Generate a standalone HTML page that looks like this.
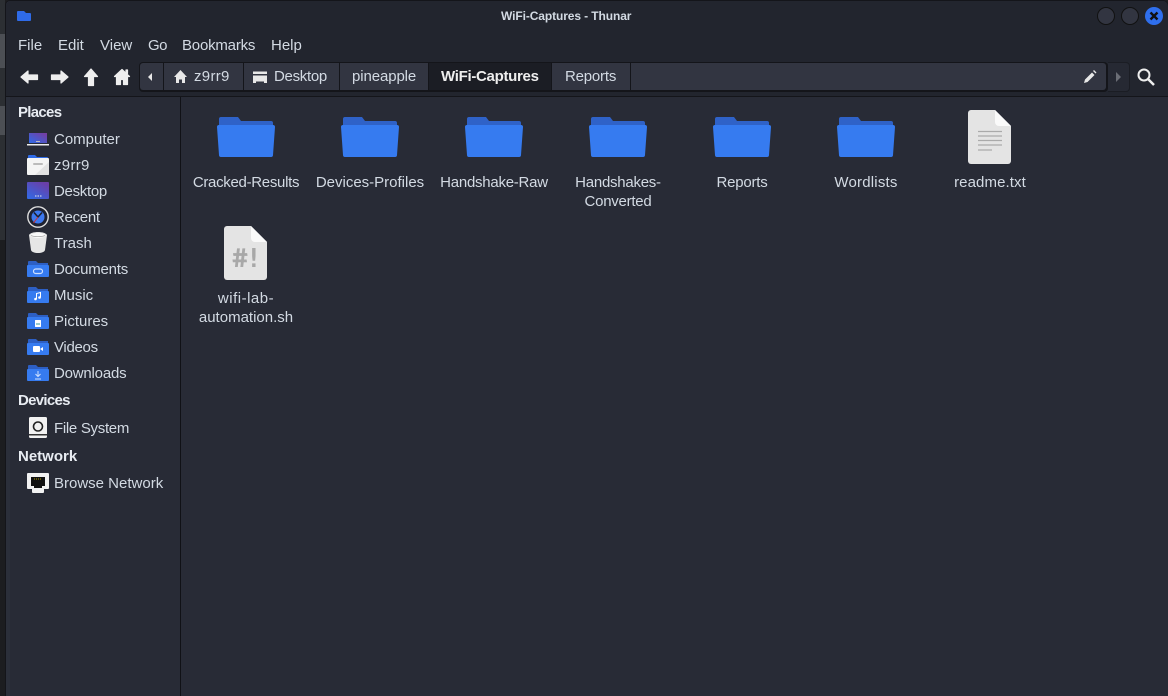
<!DOCTYPE html>
<html><head><meta charset="utf-8"><style>
html,body{margin:0;padding:0;width:1168px;height:696px;overflow:hidden;background:#1c1d20}
body{position:relative;font-family:"Liberation Sans",sans-serif;font-size:15px;color:#d3dae3}
.a{position:absolute;white-space:nowrap;line-height:18px}
.c{position:absolute;text-align:center;width:120px;line-height:19px}
.b{position:absolute;background:#323541;top:63px;height:27px;border-right:1px solid #14151a;box-sizing:border-box}
.h{font-weight:700;color:#e8ecf2;font-size:15px}
svg{position:absolute;overflow:visible}
</style></head><body>
<div style="position:absolute;left:0;top:0;width:5px;height:240px;background:#2c2f33"></div>
<div style="position:absolute;left:0;top:34px;width:5px;height:34px;background:#4c4f54"></div>
<div style="position:absolute;left:0;top:106px;width:5px;height:29px;background:#4c4f54"></div>
<div style="position:absolute;left:5px;top:0;width:1163px;height:696px;background:#282b36;border-radius:5px 5px 0 0;border:1px solid #14151a;border-bottom:0;box-sizing:border-box"></div>
<div style="position:absolute;left:6px;top:1px;width:1162px;height:95px;background:#22252e;border-radius:5px 5px 0 0"></div>
<div style="position:absolute;left:6px;top:96px;width:1162px;height:1px;background:#14151a"></div>
<div style="position:absolute;left:6px;top:97px;width:4px;height:599px;background:#2b2f3a"></div>
<div style="position:absolute;left:180px;top:97px;width:1px;height:599px;background:#101116"></div>
<div style="position:absolute;left:181px;top:97px;width:987px;height:599px;background:#282b36"></div>

<svg style="left:0;top:0" width="40" height="30"><path d="M17 12a1 1 0 0 1 1-1h6l2 2h4a1 1 0 0 1 1 1v6a1 1 0 0 1-1 1H18a1 1 0 0 1-1-1z" fill="#2f6be8"/></svg>
<div class="a" style="left:501px;top:7px;font-size:12px;font-weight:700;letter-spacing:-.1px;color:#d3dae3">WiFi-Captures - Thunar</div>
<div style="position:absolute;left:1097px;top:7px;width:16px;height:16px;border-radius:50%;background:#323541;border:1px solid #111"></div>
<div style="position:absolute;left:1121px;top:7px;width:16px;height:16px;border-radius:50%;background:#323541;border:1px solid #111"></div>
<div style="position:absolute;left:1145px;top:7px;width:18px;height:18px;border-radius:50%;background:#2f6fed"></div>
<svg style="left:1145px;top:7px" width="18" height="18"><path d="M5.500 5.500l7 7M12.500 5.500l-7 7" stroke="#111" stroke-width="2.400"/></svg>

<div class="a" style="left:18px;top:37px">File</div>
<div class="a" style="left:58px;top:37px">Edit</div>
<div class="a" style="left:100px;top:37px">View</div>
<div class="a" style="left:148px;top:37px;letter-spacing:-.5px">Go</div>
<div class="a" style="left:182px;top:37px;letter-spacing:-.2px">Bookmarks</div>
<div class="a" style="left:271px;top:37px">Help</div>

<svg style="left:0;top:60px" width="140" height="36" fill="#eee" stroke="#eee" stroke-width="1.200" stroke-linejoin="round">
<path d="M21 17l7-6v4h9.500v4.500H28v3.500z"/>
<path d="M68 17l-7-6v4h-9.500v4.500H61v3.500z"/>
<path d="M91 9l6.500 7.500h-4v9h-5v-9h-4z"/>
<path d="M122 9.500l7.500 7h-2v8H123.500v-5h-3v5h-4v-8h-2z"/><path d="M126 10h1.500v3.500l-1.500-1.500z"/>
</svg>

<div style="position:absolute;left:139px;top:62px;width:969px;height:30px;background:#14151a;border-radius:4px"></div>
<div class="b" style="left:140px;width:24px;border-radius:3px 0 0 3px"></div>
<div class="b" style="left:164px;width:80px"></div>
<div class="b" style="left:244px;width:96px"></div>
<div class="b" style="left:340px;width:89px"></div>
<div class="b" style="left:429px;width:123px;background:#1b1d24"></div>
<div class="b" style="left:552px;width:79px"></div>
<div class="b" style="left:631px;width:475px;border:0;border-radius:0 3px 3px 0"></div>
<svg style="left:140px;top:63px" width="1030" height="28" fill="#e8e8e8">
<path d="M8 14l4-4v8z"/>
<path d="M40.500 7l6.500 7h-2v6h-3v-3.500h-3V20h-3v-6h-2z"/>
<path d="M113 8.500h14V11h-14zM113 12.500h14V20h-3v-1.500h-8V20h-3z"/>
<path d="M944 20l1-3.500 7-7 2.500 2.500-7 7zM953 8l1-1 2.500 2.500-1 1z"/>
</svg>
<div style="position:absolute;left:1108px;top:62px;width:22px;height:30px;background:#262933;border-radius:0 4px 4px 0;box-sizing:border-box;border:1px solid #1b1d24;border-left:0"></div>
<svg style="left:1116px;top:72px" width="10" height="10"><path d="M0 0l5 5-5 5z" fill="#6a6d75"/></svg>
<svg style="left:1135px;top:67px" width="22" height="20" fill="none" stroke="#eee" stroke-width="2"><circle cx="9" cy="8" r="5.500"/><path d="M13 12l6 6" stroke-width="2.500"/></svg>

<div class="a" style="left:194px;top:68px;letter-spacing:.3px">z9rr9</div>
<div class="a" style="left:274px;top:68px;letter-spacing:-.3px">Desktop</div>
<div class="a" style="left:352px;top:68px;letter-spacing:-.1px">pineapple</div>
<div class="a" style="left:441px;top:68px;font-weight:700;color:#eee;letter-spacing:-.3px">WiFi-Captures</div>
<div class="a" style="left:565px;top:68px;letter-spacing:-.2px">Reports</div>

<div class="a h" style="left:18px;top:104px;letter-spacing:-.7px">Places</div>
<div class="a" style="left:54px;top:131px">Computer</div>
<div class="a" style="left:54px;top:157px;letter-spacing:.3px">z9rr9</div>
<div class="a" style="left:54px;top:183px;letter-spacing:-.3px">Desktop</div>
<div class="a" style="left:54px;top:209px;letter-spacing:-.3px">Recent</div>
<div class="a" style="left:54px;top:235px">Trash</div>
<div class="a" style="left:54px;top:261px;letter-spacing:-.2px">Documents</div>
<div class="a" style="left:54px;top:287px">Music</div>
<div class="a" style="left:54px;top:313px">Pictures</div>
<div class="a" style="left:54px;top:339px;letter-spacing:-.3px">Videos</div>
<div class="a" style="left:54px;top:365px;letter-spacing:-.2px">Downloads</div>
<div class="a h" style="left:18px;top:392px;letter-spacing:-.7px">Devices</div>
<div class="a" style="left:54px;top:420px;letter-spacing:-.3px">File System</div>
<div class="a h" style="left:18px;top:448px">Network</div>
<div class="a" style="left:54px;top:475px">Browse Network</div>

<svg style="left:0;top:0" width="60" height="500">
<defs><linearGradient id="g" x1="0" y1="1" x2="1" y2="0"><stop offset="0" stop-color="#2f6be8"/><stop offset="1" stop-color="#7a3a9c"/></linearGradient>
<linearGradient id="g2" x1="0" y1="1" x2=".7" y2="0"><stop offset="0" stop-color="#2f6be8"/><stop offset="1" stop-color="#6a3fa8"/></linearGradient></defs>
<rect x="29" y="133" width="18" height="10" fill="url(#g)"/><rect x="27" y="144" width="22" height="1.500" fill="#eee"/><rect x="36" y="141" width="4" height="1" fill="#bbb"/>
<path d="M28 156a1 1 0 0 1 1-1h6l2 2h10a1 1 0 0 1 1 1v2H28z" fill="#2f6be8"/><rect x="27" y="158" width="22" height="17" rx="1" fill="#f4f4f4"/><path d="M49 162v12a1 1 0 0 1-1 1H35z" fill="#e2e2e2"/><rect x="33" y="163" width="10" height="2" rx="1" fill="#bbb"/>
<rect x="27" y="182" width="22" height="17" rx="1" fill="url(#g2)"/><path d="M35 196h1.500M37.500 196h1.500M40 196h1.500" stroke="#eee"/>
<circle cx="38" cy="217" r="10.200" fill="#1f2230" stroke="#ddd" stroke-width="1.400"/><circle cx="38" cy="217" r="6.500" fill="#3d78ee"/><path d="M34 212.500l4 4.500 4-4.500" stroke="#1b1e2a" stroke-width="1.500" fill="none"/><path d="M38 217l-4.500 6" stroke="#c33" stroke-width="1"/>
<path d="M29 235c2-4 16-4 18 0l-2 15c-1 4-13 4-14 0z" fill="#e6e6e6"/><ellipse cx="38" cy="235.500" rx="7.500" ry="2.500" fill="#fafafa"/><path d="M31 235.500c3 1.500 11 1.500 14 0" stroke="#aaa" fill="none" stroke-width=".7"/>
<g fill="#2d5fc4">
<path d="M28 262a1 1 0 0 1 1-1h7l2 2h10v4H28z"/><path d="M28 288a1 1 0 0 1 1-1h7l2 2h10v4H28z"/><path d="M28 314a1 1 0 0 1 1-1h7l2 2h10v4H28z"/><path d="M28 340a1 1 0 0 1 1-1h7l2 2h10v4H28z"/><path d="M28 366a1 1 0 0 1 1-1h7l2 2h10v4H28z"/>
</g>
<g fill="#367bf0">
<rect x="27" y="265" width="22" height="12" rx="1"/><rect x="27" y="291" width="22" height="12" rx="1"/><rect x="27" y="317" width="22" height="12" rx="1"/><rect x="27" y="343" width="22" height="12" rx="1"/><rect x="27" y="369" width="22" height="12" rx="1"/>
</g>
<rect x="33.500" y="269" width="9" height="4.500" rx="2.200" fill="none" stroke="#cfe0ff" stroke-width="1.200"/>
<path d="M36.500 299v-5.500l4-1v5" fill="none" stroke="#fff" stroke-width="1"/><circle cx="35.500" cy="299" r="1.300" fill="#fff"/><circle cx="39.500" cy="297.500" r="1.300" fill="#fff"/>
<rect x="35" y="320" width="6" height="7" rx=".5" fill="#fff"/><rect x="36" y="323" width="4" height="2" fill="#9cc"/>
<rect x="33" y="346" width="7" height="6" rx="1" fill="#fff"/><path d="M40 349l3-2v4z" fill="#fff"/>
<path d="M38 371v5M35.500 374l2.500 2.500 2.500-2.500M35 379h6" stroke="#cfe0ff" fill="none"/>
<rect x="29" y="417" width="18" height="21" rx="1.500" fill="#f2f2f2"/><circle cx="38" cy="426.500" r="4.500" fill="none" stroke="#222" stroke-width="1.600"/><rect x="29" y="434" width="18" height="1.500" fill="#333"/>
<path d="M28 473h20a1 1 0 0 1 1 1v14a1 1 0 0 1-1 1h-4v3a1 1 0 0 1-1 1H33a1 1 0 0 1-1-1v-3h-4a1 1 0 0 1-1-1v-14a1 1 0 0 1 1-1z" fill="#f2f2f2"/><path d="M31 477h14v9h-3v2h-8v-2h-3z" fill="#111"/><path d="M34 479h8" stroke="#a90" stroke-dasharray="1 1"/>
</svg>

<svg width="0" height="0"><defs>
<g id="f"><path d="M2 6a2 2 0 0 1 2-2h17l3 4h30a2 2 0 0 1 2 2v6H2z" fill="#2f62c8"/><path d="M0 14a2 2 0 0 1 2-2h54a2 2 0 0 1 2 2l-2 28a2 2 0 0 1-2 2H4a2 2 0 0 1-2-2z" fill="#367bf0"/></g>
<g id="d"><path d="M3 0h24l16 16v35a3 3 0 0 1-3 3H3a3 3 0 0 1-3-3V3a3 3 0 0 1 3-3z" fill="#e4e4e4"/><path d="M27 0l16 16H31a4 4 0 0 1-4-4z" fill="#fafafa"/></g>
</defs></svg>
<svg style="left:217px;top:113px" width="60" height="46"><use href="#f"/></svg>
<svg style="left:341px;top:113px" width="60" height="46"><use href="#f"/></svg>
<svg style="left:465px;top:113px" width="60" height="46"><use href="#f"/></svg>
<svg style="left:589px;top:113px" width="60" height="46"><use href="#f"/></svg>
<svg style="left:713px;top:113px" width="60" height="46"><use href="#f"/></svg>
<svg style="left:837px;top:113px" width="60" height="46"><use href="#f"/></svg>
<svg style="left:968px;top:110px" width="44" height="55"><use href="#d"/><path d="M10 21.500h24M10 26h24M10 30.500h24M10 35h24M10 40h14" stroke="#aaa" stroke-width="1.200"/></svg>
<svg style="left:224px;top:226px" width="44" height="55"><use href="#d"/><g font-size="26" font-weight="700" fill="#a8a8a8" font-family="DejaVu Sans Mono"><text transform="translate(9.500 41) skewX(8)">#</text><text x="22" y="41">!</text></g></svg>

<div class="c" style="left:186px;top:173px;letter-spacing:-.3px">Cracked-Results</div>
<div class="c" style="left:310px;top:173px">Devices-Profiles</div>
<div class="c" style="left:434px;top:173px;letter-spacing:-.25px">Handshake-Raw</div>
<div class="c" style="left:558px;top:173px;letter-spacing:-.25px">Handshakes-<br>Converted</div>
<div class="c" style="left:682px;top:173px;letter-spacing:-.2px">Reports</div>
<div class="c" style="left:806px;top:173px;letter-spacing:.2px">Wordlists</div>
<div class="c" style="left:930px;top:173px;letter-spacing:.1px">readme.txt</div>
<div class="c" style="left:186px;top:289px"><span style="letter-spacing:.5px">wifi-lab-</span><br>automation.sh</div>
</body></html>
